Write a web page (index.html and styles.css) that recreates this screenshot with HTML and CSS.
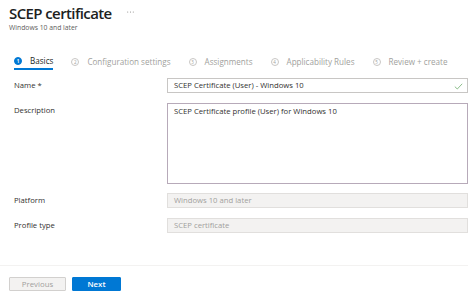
FILE: index.html
```html
<!DOCTYPE html>
<html lang="en">
<head>
<meta charset="utf-8">
<title>SCEP certificate</title>
<link rel="stylesheet" href="styles.css">
</head>
<body>
<div class="page">
  <header class="header">
    <div class="title-row">
      <h1 class="title">SCEP certificate</h1>
      <svg class="more" width="7" height="2" viewBox="0 0 7 2" aria-label="More"><circle cx="0.7" cy="1" r="0.55" fill="#8a8886"/><circle cx="3.5" cy="1" r="0.55" fill="#8a8886"/><circle cx="6.3" cy="1" r="0.55" fill="#8a8886"/></svg>
    </div>
    <div class="subtitle">Windows 10 and later</div>
  </header>

  <nav class="tabs">
    <div class="tab active"><span class="num">1</span><span class="tab-label">Basics</span></div>
    <div class="tab"><span class="num">2</span><span class="tab-label">Configuration settings</span></div>
    <div class="tab"><span class="num">3</span><span class="tab-label">Assignments</span></div>
    <div class="tab"><span class="num">4</span><span class="tab-label">Applicability Rules</span></div>
    <div class="tab"><span class="num">5</span><span class="tab-label">Review + create</span></div>
  </nav>

  <div class="form">
    <div class="label">Name *</div>
    <div class="field">SCEP Certificate (User) - Windows 10
      <svg class="check" width="9" height="7" viewBox="0 0 9 7"><path d="M0.8 3.6 L3.3 6 L8.2 0.8" fill="none" stroke="#7fb77e" stroke-width="0.9"/></svg>
    </div>

    <div class="label">Description</div>
    <div class="field area">SCEP Certificate profile (User) for Windows 10</div>

    <div class="label">Platform</div>
    <div class="field disabled">Windows 10 and later</div>

    <div class="label">Profile type</div>
    <div class="field disabled">SCEP certificate</div>
  </div>

  <footer class="footer">
    <button class="btn btn-prev" type="button">Previous</button>
    <button class="btn btn-next" type="button">Next</button>
  </footer>
</div>
</body>
</html>
```

FILE: styles.css
```css
* { box-sizing: border-box; }
html, body { margin: 0; padding: 0; background: #fff; }
body {
  font-family: "Open Sans", "Noto Sans", sans-serif;
  color: #323130;
  width: 474px;
  height: 296px;
  overflow: hidden;
}
.page {
  padding: 3px 6px 0 9px;
}
.title-row {
  display: flex;
  align-items: center;
  height: 20px;
}
.title {
  margin: 0;
  font-size: 15px;
  font-weight: 600;
  line-height: 20px;
  color: #201f1e;
  letter-spacing: -0.6px;
}
.more {
  margin-left: 15px;
  margin-top: -2px;
}
.subtitle {
  font-size: 6.8px;
  line-height: 9px;
  color: #605e5c;
}
.tabs {
  display: flex;
  gap: 18px;
  margin-top: 21px;
  padding-left: 5px;
  height: 19px;
}
.tab {
  display: flex;
  align-items: center;
  gap: 8px;
  height: 17px;
  font-size: 8.1px;
  color: #a19f9d;
}
.tab.active {
  color: #201f1e;
  border-bottom: 2px solid #0078d4;
}
.num {
  width: 8px;
  height: 8px;
  border-radius: 50%;
  border: 1px solid #c8c6c4;
  font-size: 4.5px;
  line-height: 6px;
  text-align: center;
  color: #a19f9d;
  flex: none;
}
.tab.active .num {
  background: #0078d4;
  border-color: #0078d4;
  color: #fff;
  font-weight: 700;
}
.form {
  display: grid;
  grid-template-columns: 153px 301px;
  row-gap: 10px;
  margin-top: 6px;
  padding-left: 5px;
  font-size: 7.7px;
}
.label {
  line-height: 15px;
  color: #323130;
}
.field {
  position: relative;
  height: 15px;
  border: 1px solid #c8c6c4;
  padding: 0 6px;
  line-height: 13px;
  color: #323130;
}
.field.area {
  height: 81px;
  border-color: #b7aab9;
  padding-top: 1px;
  margin-bottom: -1px;
}
.field.disabled {
  background: #f3f2f1;
  border-color: #e1dfdd;
  color: #a19f9d;
}
.check {
  position: absolute;
  right: 4px;
  top: 4px;
}
.footer {
  margin-top: 32px;
  border-top: 1px solid #f3f2f1;
  padding-top: 11px;
  display: flex;
  gap: 6px;
  margin-left: -9px;
  padding-left: 9px;
}
.btn {
  height: 14px;
  font-family: "Open Sans", "Noto Sans", sans-serif;
  font-size: 7.8px;
  line-height: 12px;
  padding: 0;
  border-radius: 1px;
}
.btn-prev {
  width: 57px;
  background: #f3f2f1;
  border: 1px solid #d2d0ce;
  color: #a19f9d;
}
.btn-next {
  width: 49px;
  background: #0078d4;
  border: 1px solid #0078d4;
  color: #fff;
  font-weight: 600;
}
```
